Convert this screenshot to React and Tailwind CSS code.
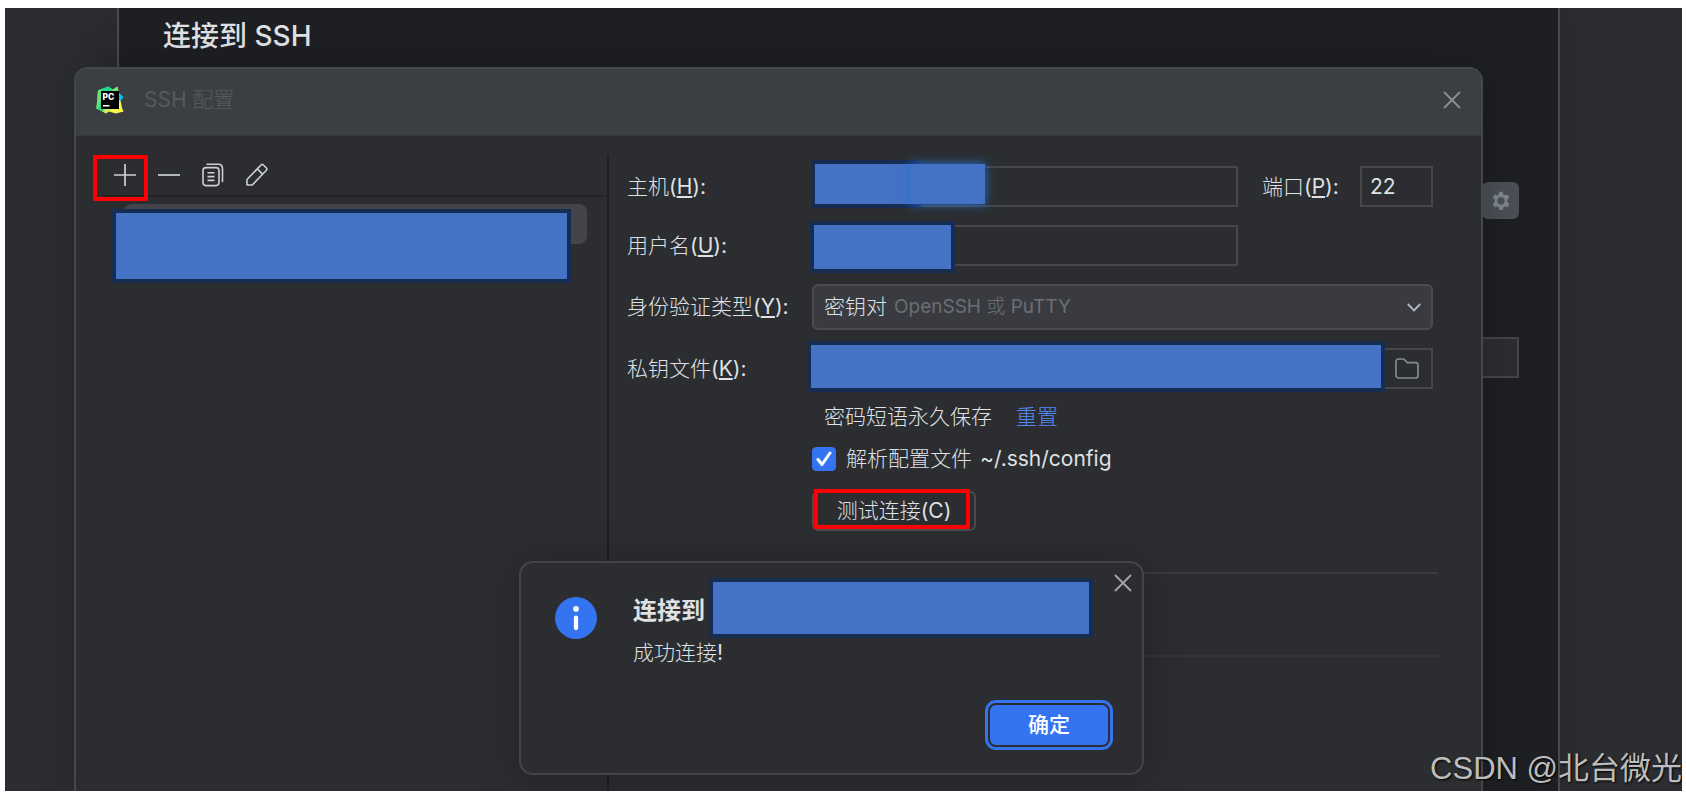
import { useState } from "react";
import clsx from "clsx";

// Icons
const CloseIcon = () => (
  <svg width="18" height="18" viewBox="0 0 18 18" fill="none" stroke="currentColor" strokeWidth="1.8">
    <path d="M1 1 17 17M17 1 1 17" />
  </svg>
);

const PlusIcon = () => (
  <svg width="22" height="22" viewBox="0 0 22 22" fill="none" stroke="currentColor" strokeWidth="1.7">
    <path d="M11 0V22M0 11H22" />
  </svg>
);

const MinusIcon = () => (
  <svg width="22" height="22" viewBox="0 0 22 22" fill="none" stroke="currentColor" strokeWidth="1.7">
    <path d="M0 11H22" />
  </svg>
);

const CopyIcon = () => (
  <svg width="22" height="24" viewBox="0 0 22 24" fill="none" stroke="currentColor" strokeWidth="1.6">
    <rect x="1" y="4.6" width="16" height="18" rx="3" />
    <path d="M5 1.2H16.5A4 4 0 0 1 20.5 5.2V18.5" strokeLinecap="round" />
    <path d="M5.5 9.8H12.5M5.5 13.6H12.5M5.5 17.4H12.5" />
  </svg>
);

const PencilIcon = () => (
  <svg width="22" height="23" viewBox="0 0 22 23" fill="none" stroke="currentColor" strokeWidth="1.6" strokeLinejoin="round">
    <path d="M1 22V16.5L15 2Q16.2 .9 17.4 2L20.4 5Q21.4 6 20.4 7.2L6.2 22Z" />
    <path d="M11.3 5.9 16.6 11.2" />
  </svg>
);

const FolderIcon = () => (
  <svg width="24" height="21" viewBox="0 0 24 21" fill="none" stroke="currentColor" strokeWidth="1.7">
    <path d="M1 3.5A2.5 2.5 0 0 1 3.5 1H8.6L12.4 4.6H20.5A2.5 2.5 0 0 1 23 7.1V17.5A2.5 2.5 0 0 1 20.5 20H3.5A2.5 2.5 0 0 1 1 17.5Z" />
  </svg>
);

const ChevronIcon = () => (
  <svg width="14" height="9" viewBox="0 0 14 9" fill="none" stroke="currentColor" strokeWidth="1.8">
    <path d="M.8 1 7 7.4 13.2 1" />
  </svg>
);

const GearIcon = () => (
  <svg width="18" height="20" viewBox="0 0 18 20">
    <path
      fill="currentColor"
      fillRule="evenodd"
      d="M7.2.8h3.6l.5 2.6 1.6.9 2.5-.9 1.9 3.2-2 1.8v2.9l2 1.8-1.9 3.2-2.5-.9-1.6.9-.5 2.7H7.2l-.5-2.7-1.6-.9-2.5.9L.7 13.1l2-1.8V8.4l-2-1.8L2.6 3.4l2.5.9 1.6-.9ZM9 6.3a3.6 3.6 0 1 0 0 7.2 3.6 3.6 0 0 0 0-7.2Z"
    />
  </svg>
);

const InfoIcon = () => (
  <svg width="42" height="42" viewBox="0 0 43 43">
    <circle cx="21.5" cy="21.5" r="21.5" fill="#3574f0" />
    <circle cx="21.5" cy="12.2" r="2.9" fill="#fff" />
    <rect x="19.3" y="19" width="4.4" height="15" rx="2.2" fill="#fff" />
  </svg>
);

const PyCharmLogo = () => (
  <svg width="28" height="28" viewBox="0 0 28 28">
    <defs>
      <linearGradient id="pc" x1="0" y1="0" x2="1" y2="1">
        <stop offset="0.2" stopColor="#21d789" />
        <stop offset="0.75" stopColor="#fcf84a" />
      </linearGradient>
    </defs>
    <path d="M2 4.5 12 .5 17 3.5 21.5 .5 23.5 9 26 22 27.5 25.5 20 27.5 13 25.5 10 27.5 .5 22.5Z" fill="url(#pc)" />
    <path d="M2 4.5 12 .5 17 3.5 13 9 7 25.5 .5 22.5Z" fill="#21d789" />
    <path d="M2 4.5 6 3 5 14 2 23 .5 22.5Z" fill="#6be07a" />
    <path d="M17 3.5 21.5 .5 22.5 6 16 6Z" fill="#7fe36a" />
    <path d="M22 6 27.5 11 24.5 15 22 14Z" fill="#07c3f2" />
    <rect x="5" y="5" width="18" height="18" fill="#000" />
    <text x="6.5" y="14" fontSize="8.5" fontWeight="800" fill="#fff" fontFamily="Inter, sans-serif">
      PC
    </text>
    <rect x="7" y="19" width="6.5" height="1.5" fill="#fff" />
  </svg>
);

// Solid block that hides private values
const Mask = ({ className }) => (
  <span className={clsx("absolute z-10 border-4 border-[#172c51] bg-[#4472c4]", className)} />
);

const Label = ({ htmlFor, text, hotkey }) => (
  <label htmlFor={htmlFor} className="whitespace-nowrap">
    {text}
    <span className="font-normal">
      (<u className="underline-offset-2">{hotkey}</u>):
    </span>
  </label>
);

const Toolbar = () => (
  <div className="ml-[27px] flex h-[43px] items-center border-b-2 border-[#232427] text-[#ced0d6]">
    <button aria-label="添加" className="flex w-11 justify-center">
      <PlusIcon />
    </button>
    <button aria-label="移除" className="flex w-11 justify-center">
      <MinusIcon />
    </button>
    <button aria-label="复制" className="flex w-11 justify-center">
      <CopyIcon />
    </button>
    <button aria-label="编辑" className="flex w-11 justify-center">
      <PencilIcon />
    </button>
  </div>
);

const ConfigForm = () => {
  const [port, setPort] = useState("22");
  const [parseConfig, setParseConfig] = useState(true);

  return (
    <form className="flex flex-col pr-[5px]" onSubmit={e => e.preventDefault()}>
      <div className="mb-[18px] grid grid-cols-[185px_1fr] items-center gap-y-[18px]">
        <Label htmlFor="host" text="主机" hotkey="H" />
        <div className="flex items-center">
          <div className="relative flex-1">
            <input id="host" className="block h-[41px] w-full border-2 border-[#45474b] bg-transparent px-2" />
            <Mask className="-left-px -top-1.5 h-12 w-[110px]" />
            <span className="absolute -top-0.5 left-[98px] z-10 h-10 w-[75px] bg-[#4472c4] shadow-[0_0_10px_#2473d0]" />
          </div>
          <div className="ml-6 flex w-[171px] items-center justify-between">
            <Label htmlFor="port" text="端口" hotkey="P" />
            <input
              id="port"
              value={port}
              onChange={e => setPort(e.target.value)}
              className="block h-[41px] w-[73px] border-2 border-[#45474b] bg-transparent px-2 font-normal"
            />
          </div>
        </div>

        <Label htmlFor="user" text="用户名" hotkey="U" />
        <div className="relative mr-[195px]">
          <input id="user" className="block h-[41px] w-full border-2 border-[#45474b] bg-transparent px-2" />
          <Mask className="-left-0.5 -top-1 h-[52px] w-[145px]" />
        </div>

        <Label htmlFor="auth" text="身份验证类型" hotkey="Y" />
        <div className="relative flex items-center">
          <select
            id="auth"
            className="h-[46px] w-full appearance-none rounded-md border-2 border-[#4a4c50] bg-[#393b40] px-2.5"
          >
            <option>密钥对</option>
          </select>
          <span className="pointer-events-none absolute left-[82px] text-[19px] font-normal text-[#6b6f75]">
            OpenSSH <span className="font-light">或</span> PuTTY
          </span>
          <span className="pointer-events-none absolute right-3 text-[#b4b8bf]">
            <ChevronIcon />
          </span>
        </div>

        <Label htmlFor="key" text="私钥文件" hotkey="K" />
        <div className="relative flex h-[41px] items-center border-2 border-[#45474b]">
          <input id="key" className="h-full min-w-0 flex-1 bg-transparent px-2" />
          <Mask className="-left-[7px] -top-[9px] right-[46px] h-[51px]" />
          <button aria-label="浏览" className="mr-3 text-[#868a91]">
            <FolderIcon />
          </button>
        </div>
      </div>

      <div className="ml-[185px] flex flex-col items-start">
        <div className="-mt-1 flex h-7 items-center gap-6 pl-3">
          <span>密码短语永久保存</span>
          <a href="#reset" className="text-[#548af7]">
            重置
          </a>
        </div>
        <label className="mt-4 flex h-6 items-center gap-2.5">
          <span className="grid size-6 place-items-center">
            <input
              type="checkbox"
              checked={parseConfig}
              onChange={e => setParseConfig(e.target.checked)}
              className="col-start-1 row-start-1 size-6 appearance-none rounded border border-[#4e5157] checked:border-[#3574f0] checked:bg-[#3574f0]"
            />
            {parseConfig && (
              <svg className="pointer-events-none col-start-1 row-start-1" width="16" height="16" viewBox="0 0 16 16" fill="none" stroke="#fff" strokeWidth="3" strokeLinecap="round" strokeLinejoin="round">
                <path d="M2 8.5 6 13.5 14 2" />
              </svg>
            )}
          </span>
          <span className="flex gap-2">
            解析配置文件 <span className="font-normal">~/.ssh/config</span>
          </span>
        </label>
        <div className="relative mt-5">
          <button className="h-10 w-[164px] rounded-md border-2 border-[#4a4c50]">
            测试连接<span className="font-normal">(C)</span>
          </button>
          <span className="pointer-events-none absolute -top-0.5 left-0.5 h-10 w-[156px] border-4 border-[#fe0000]" />
        </div>
      </div>
    </form>
  );
};

const ConfigDialog = () => (
  <section className="absolute inset-x-0 bottom-0 top-[59px] ml-[69px] mr-[199px] flex flex-col rounded-t-[14px] border-2 border-b-0 border-[#45474a] bg-[#2b2d30] shadow-[0_0_40px_rgba(0,0,0,0.2)]">
    <header className="flex h-[67px] items-center rounded-t-xl border-b border-[#36393b] bg-[#3c3f41] px-5 pb-1 text-[#57595d]">
      <PyCharmLogo />
      <h2 className="ml-5 flex-1 text-[21px]">
        <span className="font-normal">SSH</span> 配置
      </h2>
      <button aria-label="关闭" className="text-[#8c8e90]">
        <CloseIcon />
      </button>
    </header>
    <div className="flex flex-1 pt-[18px]">
      <aside className="relative w-[531px] shrink-0">
        <Toolbar />
        <span className="pointer-events-none absolute left-[17px] top-px h-[46px] w-[55px] border-4 border-[#fe0000]" />
        <div className="relative mt-[7px]">
          <div className="ml-12 mr-5 h-10 rounded-lg bg-[#43454a]" />
          <Mask className="left-9 top-[5px] h-[74px] w-[459px]" />
        </div>
      </aside>
      <div className="flex-1 border-l-2 border-[#1e1f22] pl-[18px] pr-[43px] pt-3">
        <ConfigForm />
        <hr className="mt-[41px] border-t-2 border-[#393b3e]" />
        <hr className="mt-[81px] border-t-2 border-[#333538]" />
      </div>
    </div>
  </section>
);

const SuccessDialog = () => (
  <section
    role="dialog"
    className="absolute left-[514px] top-[553px] flex h-[214px] w-[625px] rounded-[14px] border-2 border-[#43454a] bg-[#2b2d30] pl-[34px] shadow-[0_4px_40px_rgba(0,0,0,0.25)]"
  >
    <div className="pt-[34px]">
      <InfoIcon />
    </div>
    <div className="relative ml-9 flex flex-1 flex-col pt-8">
      <h3 className="text-2xl leading-8 font-semibold">连接到</h3>
      <p className="mt-3 leading-7">
        成功连接<span className="font-normal">!</span>
      </p>
      <Mask className="left-[76px] top-[15px] h-[60px] w-[384px]" />
      <button className="mr-[34px] mt-[38px] h-10 w-[118px] self-end rounded-md bg-[#3574f0] text-[21px] font-medium text-white outline-3 outline-offset-2 outline-[#3574f0]">
        确定
      </button>
    </div>
    <button aria-label="关闭" className="absolute right-2.5 top-[11px] text-[#a4a6a9]">
      <CloseIcon />
    </button>
  </section>
);

const App = () => (
  <div className="flex min-h-screen bg-white pb-2 pl-[5px] pr-1 pt-2">
    <main
      lang="zh-CN"
      className="relative flex flex-1 overflow-hidden bg-[#2b2d30] font-['Inter','Noto_Sans_CJK_SC',sans-serif] text-[21px] leading-7 font-light text-[#dfe1e5]"
    >
      <div className="relative ml-[112px] mr-[122px] flex-1 border-x-2 border-[#4a4b4d] bg-[#1e1f22] shadow-[0_0_40px_rgba(0,0,0,0.15)]">
        <h1 className="ml-11 mt-3 text-[28px] leading-8 font-medium">连接到 SSH</h1>
        <div className="mr-[39px] mt-[130px] flex justify-end">
          <button aria-label="设置" className="flex h-[37px] w-[37px] items-center justify-center rounded-md bg-[#4b4e55] text-[#7c868e]">
            <GearIcon />
          </button>
        </div>
        <div className="ml-auto mr-[39px] mt-[118px] h-[41px] w-40 border-2 border-[#43454a] bg-[#2b2d30]" />
      </div>
      <ConfigDialog />
      <SuccessDialog />
      <p className="absolute bottom-1 right-0 whitespace-nowrap font-['Liberation_Sans','Noto_Sans_CJK_SC',sans-serif] text-[31px] leading-9 font-normal text-[#bdbdbd] [text-shadow:1px_1px_2px_#000]">
        CSDN @北台微光
      </p>
    </main>
  </div>
);

export default App;
